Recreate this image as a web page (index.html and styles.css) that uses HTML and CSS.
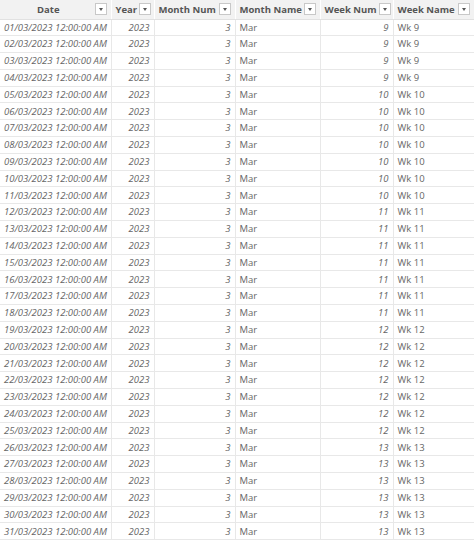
FILE: index.html
```html
<!DOCTYPE html>
<html lang="en">
<head>
    <meta charset="UTF-8">
    <title>Date Table</title>
    <link rel="stylesheet" href="styles.css">
</head>
<body>
    <table class="grid">
        <colgroup>
            <col class="c-date">
            <col class="c-year">
            <col class="c-mnum">
            <col class="c-mname">
            <col class="c-wnum">
            <col class="c-wname">
        </colgroup>
        <thead>
            <tr>
                <th><div class="th-inner th-center"><span class="th-label">Date</span><span class="dd"></span></div></th>
                <th><div class="th-inner"><span class="th-label">Year</span><span class="dd"></span></div></th>
                <th><div class="th-inner"><span class="th-label">Month Num</span><span class="dd"></span></div></th>
                <th><div class="th-inner"><span class="th-label">Month Name</span><span class="dd"></span></div></th>
                <th><div class="th-inner"><span class="th-label">Week Num</span><span class="dd"></span></div></th>
                <th><div class="th-inner"><span class="th-label">Week Name</span><span class="dd"></span></div></th>
            </tr>
        </thead>
        <tbody>
            <tr><td class="num">01/03/2023 12:00:00 AM</td><td class="num">2023</td><td class="num">3</td><td>Mar</td><td class="num">9</td><td>Wk 9</td></tr>
            <tr><td class="num">02/03/2023 12:00:00 AM</td><td class="num">2023</td><td class="num">3</td><td>Mar</td><td class="num">9</td><td>Wk 9</td></tr>
            <tr><td class="num">03/03/2023 12:00:00 AM</td><td class="num">2023</td><td class="num">3</td><td>Mar</td><td class="num">9</td><td>Wk 9</td></tr>
            <tr><td class="num">04/03/2023 12:00:00 AM</td><td class="num">2023</td><td class="num">3</td><td>Mar</td><td class="num">9</td><td>Wk 9</td></tr>
            <tr><td class="num">05/03/2023 12:00:00 AM</td><td class="num">2023</td><td class="num">3</td><td>Mar</td><td class="num">10</td><td>Wk 10</td></tr>
            <tr><td class="num">06/03/2023 12:00:00 AM</td><td class="num">2023</td><td class="num">3</td><td>Mar</td><td class="num">10</td><td>Wk 10</td></tr>
            <tr><td class="num">07/03/2023 12:00:00 AM</td><td class="num">2023</td><td class="num">3</td><td>Mar</td><td class="num">10</td><td>Wk 10</td></tr>
            <tr><td class="num">08/03/2023 12:00:00 AM</td><td class="num">2023</td><td class="num">3</td><td>Mar</td><td class="num">10</td><td>Wk 10</td></tr>
            <tr><td class="num">09/03/2023 12:00:00 AM</td><td class="num">2023</td><td class="num">3</td><td>Mar</td><td class="num">10</td><td>Wk 10</td></tr>
            <tr><td class="num">10/03/2023 12:00:00 AM</td><td class="num">2023</td><td class="num">3</td><td>Mar</td><td class="num">10</td><td>Wk 10</td></tr>
            <tr><td class="num">11/03/2023 12:00:00 AM</td><td class="num">2023</td><td class="num">3</td><td>Mar</td><td class="num">10</td><td>Wk 10</td></tr>
            <tr><td class="num">12/03/2023 12:00:00 AM</td><td class="num">2023</td><td class="num">3</td><td>Mar</td><td class="num">11</td><td>Wk 11</td></tr>
            <tr><td class="num">13/03/2023 12:00:00 AM</td><td class="num">2023</td><td class="num">3</td><td>Mar</td><td class="num">11</td><td>Wk 11</td></tr>
            <tr><td class="num">14/03/2023 12:00:00 AM</td><td class="num">2023</td><td class="num">3</td><td>Mar</td><td class="num">11</td><td>Wk 11</td></tr>
            <tr><td class="num">15/03/2023 12:00:00 AM</td><td class="num">2023</td><td class="num">3</td><td>Mar</td><td class="num">11</td><td>Wk 11</td></tr>
            <tr><td class="num">16/03/2023 12:00:00 AM</td><td class="num">2023</td><td class="num">3</td><td>Mar</td><td class="num">11</td><td>Wk 11</td></tr>
            <tr><td class="num">17/03/2023 12:00:00 AM</td><td class="num">2023</td><td class="num">3</td><td>Mar</td><td class="num">11</td><td>Wk 11</td></tr>
            <tr><td class="num">18/03/2023 12:00:00 AM</td><td class="num">2023</td><td class="num">3</td><td>Mar</td><td class="num">11</td><td>Wk 11</td></tr>
            <tr><td class="num">19/03/2023 12:00:00 AM</td><td class="num">2023</td><td class="num">3</td><td>Mar</td><td class="num">12</td><td>Wk 12</td></tr>
            <tr><td class="num">20/03/2023 12:00:00 AM</td><td class="num">2023</td><td class="num">3</td><td>Mar</td><td class="num">12</td><td>Wk 12</td></tr>
            <tr><td class="num">21/03/2023 12:00:00 AM</td><td class="num">2023</td><td class="num">3</td><td>Mar</td><td class="num">12</td><td>Wk 12</td></tr>
            <tr><td class="num">22/03/2023 12:00:00 AM</td><td class="num">2023</td><td class="num">3</td><td>Mar</td><td class="num">12</td><td>Wk 12</td></tr>
            <tr><td class="num">23/03/2023 12:00:00 AM</td><td class="num">2023</td><td class="num">3</td><td>Mar</td><td class="num">12</td><td>Wk 12</td></tr>
            <tr><td class="num">24/03/2023 12:00:00 AM</td><td class="num">2023</td><td class="num">3</td><td>Mar</td><td class="num">12</td><td>Wk 12</td></tr>
            <tr><td class="num">25/03/2023 12:00:00 AM</td><td class="num">2023</td><td class="num">3</td><td>Mar</td><td class="num">12</td><td>Wk 12</td></tr>
            <tr><td class="num">26/03/2023 12:00:00 AM</td><td class="num">2023</td><td class="num">3</td><td>Mar</td><td class="num">13</td><td>Wk 13</td></tr>
            <tr><td class="num">27/03/2023 12:00:00 AM</td><td class="num">2023</td><td class="num">3</td><td>Mar</td><td class="num">13</td><td>Wk 13</td></tr>
            <tr><td class="num">28/03/2023 12:00:00 AM</td><td class="num">2023</td><td class="num">3</td><td>Mar</td><td class="num">13</td><td>Wk 13</td></tr>
            <tr><td class="num">29/03/2023 12:00:00 AM</td><td class="num">2023</td><td class="num">3</td><td>Mar</td><td class="num">13</td><td>Wk 13</td></tr>
            <tr><td class="num">30/03/2023 12:00:00 AM</td><td class="num">2023</td><td class="num">3</td><td>Mar</td><td class="num">13</td><td>Wk 13</td></tr>
            <tr><td class="num">31/03/2023 12:00:00 AM</td><td class="num">2023</td><td class="num">3</td><td>Mar</td><td class="num">13</td><td>Wk 13</td></tr>
        </tbody>
    </table>
</body>
</html>
```

FILE: styles.css
```css
* {
    margin: 0;
    padding: 0;
    box-sizing: border-box;
}

body {
    background: #ffffff;
    font-family: 'Open Sans', 'Noto Sans', sans-serif;
    font-size: 9.5px;
    color: #666666;
}

.grid {
    width: 474px;
    table-layout: fixed;
    border-collapse: collapse;
}

.c-date { width: 111px; }
.c-year { width: 43px; }
.c-mnum { width: 81px; }
.c-mname { width: 85px; }
.c-wnum { width: 73px; }
.c-wname { width: 81px; }

.grid th {
    height: 19px;
    background: #f2f2f2;
    border-right: 1px solid #ffffff;
    border-bottom: 1px solid #e1e1e1;
    font-weight: 700;
    color: #555555;
    text-align: left;
    padding: 0 4px;
    white-space: nowrap;
}

.th-inner {
    display: flex;
    align-items: center;
    justify-content: space-between;
    gap: 2px;
}

.th-center .th-label {
    flex: 1;
    text-align: center;
}

/* filter dropdown button */
.dd {
    flex: none;
    width: 12px;
    height: 12px;
    background: #ffffff;
    border: 1px solid #c8c8c8;
    position: relative;
}

.dd::after {
    content: "";
    position: absolute;
    left: 3px;
    top: 4px;
    border-left: 2.5px solid transparent;
    border-right: 2.5px solid transparent;
    border-top: 3px solid #555555;
}

.grid td {
    height: 16.8px;
    padding: 0 4px;
    border-right: 1px solid #e8e8e8;
    border-bottom: 1px solid #e8e8e8;
    white-space: nowrap;
    overflow: hidden;
    line-height: 1;
}

.grid td.num {
    font-style: italic;
    text-align: right;
}

.grid td:first-child {
    text-align: left;
}
```
